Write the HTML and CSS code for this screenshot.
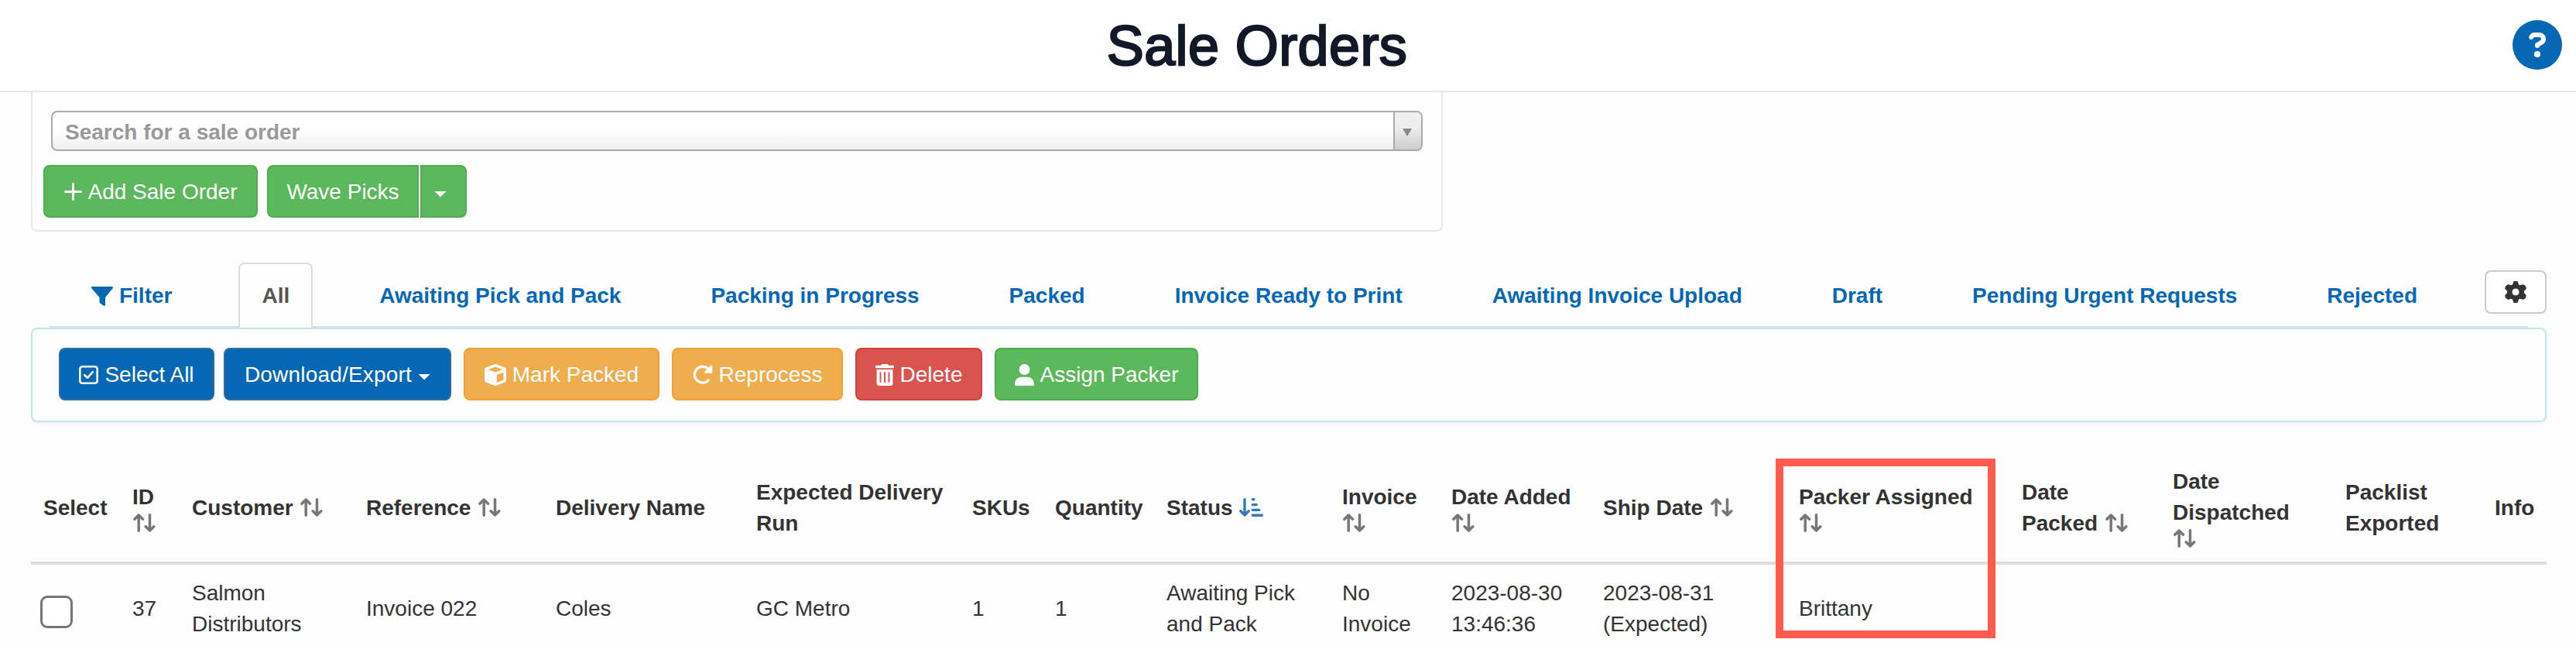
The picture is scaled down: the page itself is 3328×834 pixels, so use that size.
FILE: index.html
```html
<!DOCTYPE html>
<html lang="en">
<head>
    <meta charset="UTF-8">
    <meta name="viewport" content="width=device-width, initial-scale=1.0">
    <title>Sale Orders</title>
    <link rel="stylesheet" href="styles.css">
</head>
<body>
    <!-- shared icons -->
    <svg class="icon-defs" width="0" height="0">
        <symbol id="icon-sort" viewBox="0 0 29 24">
            <path d="M7.2 2v20.2M1.9 7.2L7.2 2l5.3 5.2M21.5 1.8V22M16.2 16.8l5.3 5.2 5.3-5.2" fill="none" stroke="currentColor" stroke-width="3.5" stroke-linecap="round" stroke-linejoin="round"/>
        </symbol>
        <symbol id="icon-sort-active" viewBox="0 0 31 24">
            <path d="M7 1.8V22M1.8 16.8L7 22l5.2-5.2M17.3 1.8h1.6M17.3 8.6h5M17.3 15.4h8.6M17.3 22.2h12.1" fill="none" stroke="currentColor" stroke-width="3.4" stroke-linecap="round" stroke-linejoin="round"/>
        </symbol>
    </svg>

    <header class="page-header">
        <h1>Sale Orders</h1>
        <a class="help" href="#" aria-label="Help">
            <svg width="64" height="64" viewBox="0 0 64 64">
                <circle cx="32" cy="32" r="32" fill="#0668b5"/>
                <path d="M24.3 22c.8-2 2-3 4.500-3h5.400c3.600 0 5.800 2.300 5.800 5.200 0 2.500-1.400 4-3.200 5L32 31.800V33" fill="none" stroke="#fff" stroke-width="6" stroke-linecap="round" stroke-linejoin="round"/>
                <circle cx="32" cy="44" r="4.1" fill="#fff"/>
            </svg>
        </a>
    </header>

    <section class="search-panel">
        <div class="search-select">
            <span class="search-text">Search for a sale order</span>
            <span class="search-arrow"><i></i></span>
        </div>
        <div class="btn-row">
            <button class="btn btn-success btn-add">
                <svg width="23" height="23" viewBox="0 0 23 23"><path d="M11.5 1.5v20M1.5 11.5h20" stroke="#fff" stroke-width="3" stroke-linecap="round"/></svg>
                Add Sale Order
            </button>
            <div class="btn-group">
                <button class="btn btn-success btn-wave">Wave Picks</button>
                <button class="btn btn-success btn-toggle"><i class="caret"></i></button>
            </div>
        </div>
    </section>

    <nav class="tabs">
        <ul class="tab-list">
            <li class="tab tab-filter">
                <svg width="28" height="25" viewBox="0 0 28 25"><path d="M1.3 0h25.4c1.2 0 1.7 1.3.9 2.2L18 14v9.8c0 1-1 1.5-1.9.9l-4.8-3.3c-.5-.3-.8-.8-.8-1.300V14L.4 2.200C-.4 1.300.1 0 1.300 0z" fill="#0668b5"/></svg>
                Filter
            </li>
            <li class="tab active">All</li>
            <li class="tab">Awaiting Pick and Pack</li>
            <li class="tab">Packing in Progress</li>
            <li class="tab">Packed</li>
            <li class="tab">Invoice Ready to Print</li>
            <li class="tab">Awaiting Invoice Upload</li>
            <li class="tab">Draft</li>
            <li class="tab">Pending Urgent Requests</li>
            <li class="tab">Rejected</li>
        </ul>
        <button class="btn-gear" aria-label="Settings">
            <svg width="28" height="28" viewBox="0 0 28 28">
                <path fill="#333" stroke="#333" stroke-linejoin="round" fill-rule="evenodd" d="M11.600.5h4.800l.9 3.900 2.500 1.400 3.900-1.200 3 2 .5 3.500-2.600 2.500v2.800l2.600 2.500-.5 3.500-3 2-3.900-1.200-2.500 1.400-.9 3.900h-4.800l-.9-3.900-2.500-1.400-3.900 1.200-3-2-.5-3.500 2.600-2.500v-2.800L.8 10.100l.5-3.500 3-2 3.900 1.200 2.500-1.400zM14 9a5 5 0 1 0 0 10 5 5 0 0 0 0-10z"/>
            </svg>
        </button>
    </nav>

    <section class="toolbar">
        <button class="btn btn-primary btn-select">
            <svg width="25" height="24" viewBox="0 0 25 24"><rect x="1.3" y="1.3" width="22.4" height="21.4" rx="3" fill="none" stroke="#fff" stroke-width="2.6"/><path d="M7.2 12.2l3.7 3.600 7-7.600" fill="none" stroke="#fff" stroke-width="2.6" stroke-linecap="round" stroke-linejoin="round"/></svg>
            Select All
        </button>
        <button class="btn btn-primary btn-download">Download/Export <i class="caret"></i></button>
        <button class="btn btn-warning btn-mark">
            <svg width="28" height="28" viewBox="0 0 28 28"><path fill="#fff" fill-rule="evenodd" d="M12.8.3a3 3 0 0 1 2.400 0L26.300 4.600A2.600 2.600 0 0 1 28 7v14a2.600 2.600 0 0 1-1.600 2.400L15.200 27.700a3 3 0 0 1-2.400 0L1.600 23.400A2.600 2.600 0 0 1 0 21V7a2.600 2.600 0 0 1 1.700-2.400zM14 3.700L4.800 7.100 14 10.600l9.200-3.500zM15.800 14v10l8.700-3.600v-9.600z"/></svg>
            Mark Packed
        </button>
        <button class="btn btn-warning btn-reprocess">
            <svg width="26" height="25" viewBox="0 0 26 25"><path d="M20.300 19.800A10.400 10.400 0 1 1 19.500 4.800l2.900 2.900" fill="none" stroke="#fff" stroke-width="3.400" stroke-linecap="round"/><path d="M24 2v7.500h-7.500z" fill="#fff" stroke="#fff" stroke-width="2.600" stroke-linejoin="round"/></svg>
            Reprocess
        </button>
        <button class="btn btn-danger btn-delete">
            <svg width="24" height="28" viewBox="0 0 24 28"><path fill="#fff" fill-rule="evenodd" d="M8.300 0h7.400l1.300 1.700h6c.6 0 1 .5 1 1v1.500c0 .6-.4 1-1 1H1c-.6 0-1-.4-1-1V2.700c0-.5.400-1 1-1h6zM1.600 7h20.800v18c0 1.700-1.300 3-3 3H4.600c-1.700 0-3-1.300-3-3zM5.500 10.500v13.200h2V10.500zM11 10.500v13.200h2V10.500zM16.500 10.500v13.200h2V10.500z"/></svg>
            Delete
        </button>
        <button class="btn btn-success btn-assign">
            <svg width="25" height="28" viewBox="0 0 25 28"><circle cx="12.5" cy="7" r="7" fill="#fff"/><path d="M8 16.700h9c4.600 0 8 4.200 8 9.300v.8c0 .7-.5 1.200-1.100 1.200H1.100C.5 28 0 27.500 0 26.800V26c0-5.100 3.400-9.300 8-9.300z" fill="#fff"/></svg>
            Assign Packer
        </button>
    </section>

    <div class="table-wrap">
        <table class="orders">
            <colgroup>
                <col class="c-select"><col class="c-id"><col class="c-customer"><col class="c-reference">
                <col class="c-delivery"><col class="c-run"><col class="c-skus"><col class="c-quantity">
                <col class="c-status"><col class="c-invoice"><col class="c-added"><col class="c-ship">
                <col class="c-packer"><col class="c-packed"><col class="c-dispatched"><col class="c-packlist">
                <col class="c-info">
            </colgroup>
            <thead>
                <tr>
                    <th>Select</th>
                    <th>ID <svg class="sort below"><use href="#icon-sort"/></svg></th>
                    <th>Customer <svg class="sort"><use href="#icon-sort"/></svg></th>
                    <th>Reference <svg class="sort"><use href="#icon-sort"/></svg></th>
                    <th>Delivery Name</th>
                    <th>Expected Delivery<br>Run</th>
                    <th>SKUs</th>
                    <th>Quantity</th>
                    <th>Status <svg class="sort sorted"><use href="#icon-sort-active"/></svg></th>
                    <th>Invoice <svg class="sort below"><use href="#icon-sort"/></svg></th>
                    <th>Date Added <svg class="sort below"><use href="#icon-sort"/></svg></th>
                    <th>Ship Date <svg class="sort"><use href="#icon-sort"/></svg></th>
                    <th>Packer Assigned <svg class="sort below"><use href="#icon-sort"/></svg></th>
                    <th>Date<br>Packed <svg class="sort"><use href="#icon-sort"/></svg></th>
                    <th>Date<br>Dispatched <svg class="sort below"><use href="#icon-sort"/></svg></th>
                    <th>Packlist<br>Exported</th>
                    <th>Info</th>
                </tr>
            </thead>
            <tbody>
                <tr>
                    <td><input type="checkbox" class="row-check"></td>
                    <td>37</td>
                    <td>Salmon<br>Distributors</td>
                    <td>Invoice 022</td>
                    <td>Coles</td>
                    <td>GC Metro</td>
                    <td>1</td>
                    <td>1</td>
                    <td>Awaiting Pick<br>and Pack</td>
                    <td>No<br>Invoice</td>
                    <td>2023-08-30<br>13:46:36</td>
                    <td>2023-08-31<br>(Expected)</td>
                    <td>Brittany</td>
                    <td></td>
                    <td></td>
                    <td></td>
                    <td></td>
                </tr>
            </tbody>
        </table>
        <div class="highlight"></div>
    </div>
</body>
</html>
```

FILE: styles.css
```css
* {
    box-sizing: border-box;
}
body {
    margin: 0;
    height: 834px;
    overflow: hidden;
    background-color: #fefefe;
    color: #333;
    font-family: "Helvetica Neue", "Liberation Sans", Arial, sans-serif;
    font-size: 28px;
    line-height: 40px;
}
.icon-defs {
    display: none;
}

/* header */
.page-header {
    display: grid;
    grid-template-columns: 1fr auto 1fr;
    align-items: center;
    height: 119px;
    padding: 0 18px 2px;
    border-bottom: 2px solid #e5e7eb;
    background-color: #fff;
}
h1 {
    grid-column: 2;
    margin: 0;
    padding: 2px 80px 0 0;
    font-size: 72px;
    font-weight: normal;
    line-height: 80px;
    letter-spacing: 0.4px;
    color: #111827;
    -webkit-text-stroke: 2.4px #111827;
}
.help {
    justify-self: end;
    height: 64px;
}

/* search */
.search-panel {
    width: 1824px;
    height: 180px;
    margin-left: 40px;
    padding: 24px 14px 0;
    border: 2px solid #e5e7eb;
    border-top: none;
    border-radius: 0 0 8px 8px;
}
.search-select {
    display: flex;
    height: 52px;
    margin: 0 10px;
    border: 2px solid #aaa;
    border-radius: 8px;
    overflow: hidden;
    background: linear-gradient(#fff 50%, #eee);
}
.search-text {
    flex: 1;
    padding-left: 16px;
    line-height: 52px;
    font-weight: bold;
    color: #999;
}
.search-arrow {
    display: flex;
    justify-content: center;
    width: 36px;
    padding: 21px 2px 0 0;
    border-left: 2px solid #aaa;
    background: linear-gradient(#eee 40%, #ccc);
}
.search-arrow i {
    width: 12px;
    height: 10px;
    background-color: #888;
    clip-path: polygon(0 0, 100% 0, 50% 100%);
}

/* buttons */
.btn-row {
    display: flex;
    gap: 12px;
    margin-top: 18px;
}
.btn-group {
    display: flex;
    gap: 2px;
}
.btn {
    display: flex;
    align-items: center;
    justify-content: center;
    gap: 8px;
    height: 68px;
    padding: 1px 0 0;
    border: 2px solid;
    border-radius: 8px;
    font: inherit;
    line-height: 40px;
    color: #fff;
    white-space: nowrap;
    cursor: pointer;
}
.btn-success {
    background-color: #5cb85c;
    border-color: #4cae4c;
}
.btn-primary {
    background-color: #0668b5;
    border-color: #2e6da4;
}
.btn-warning {
    background-color: #f0ad4e;
    border-color: #eea236;
}
.btn-danger {
    background-color: #d9534f;
    border-color: #d43f3a;
}
.btn-add {
    width: 277px;
}
.btn-wave {
    width: 196px;
    border-radius: 8px 0 0 8px;
}
.btn-toggle {
    width: 60px;
    padding-right: 8px;
    border-radius: 0 8px 8px 0;
}
.caret {
    width: 16px;
    height: 8px;
    margin-top: 6px;
    background-color: #fff;
    clip-path: polygon(0 0, 100% 0, 50% 100%);
}

/* tabs */
.tabs {
    display: flex;
    align-items: flex-start;
    justify-content: space-between;
    height: 84px;
    margin: 40px 38px 0 64px;
    background: linear-gradient(#ddd, #ddd) 0 82px / 3202px 2px no-repeat;
}
.tab-list {
    display: flex;
    justify-content: space-around;
    width: 3121px;
    margin: 0 0 0 -4px;
    padding: 0;
    list-style: none;
}
.tab {
    display: flex;
    align-items: center;
    gap: 8px;
    height: 84px;
    padding: 0 28px;
    border: 2px solid transparent;
    border-bottom: none;
    font-weight: bold;
    color: #0668b5;
    white-space: nowrap;
}
.tab.active {
    border-color: #ddd;
    border-radius: 8px 8px 0 0;
    background-color: #fefefe;
    color: #555;
}
.btn-gear {
    display: flex;
    align-items: center;
    justify-content: center;
    width: 80px;
    height: 56px;
    margin-top: 10px;
    padding: 0;
    border: 2px solid #ccc;
    border-radius: 8px;
    background-color: #fff;
}

/* toolbar */
.toolbar {
    display: flex;
    gap: 16px;
    height: 122px;
    margin: 0 38px 0 40px;
    padding: 24px 34px;
    border: 2px solid #bce8f1;
    border-radius: 8px;
    box-shadow: 0 2px 2px rgba(0, 0, 0, 0.05);
}
.btn-select {
    width: 201px;
    margin-right: -4px;
}
.btn-download {
    width: 294px;
    letter-spacing: 0.2px;
}
.btn-mark {
    width: 253px;
}
.btn-reprocess {
    width: 221px;
}
.btn-delete {
    width: 164px;
}
.btn-assign {
    width: 263px;
}

/* table */
.table-wrap {
    position: relative;
    width: 3250px;
    margin: 41px 0 0 40px;
}
.orders {
    width: 3250px;
    table-layout: fixed;
    border-collapse: separate;
    border-spacing: 0;
}
.orders th,
.orders td {
    padding: 17px 0 15px 17px;
    text-align: left;
    vertical-align: middle;
    white-space: nowrap;
}
.orders th {
    height: 143px;
    padding: 0 0 0 17px;
    border-bottom: 4px solid #ddd;
}
.orders th:first-child,
.orders td:first-child {
    padding-left: 16px;
}
.c-select { width: 114px; }
.c-id { width: 77px; }
.c-customer { width: 225px; }
.c-reference { width: 245px; }
.c-delivery { width: 259px; }
.c-run { width: 279px; }
.c-skus { width: 107px; }
.c-quantity { width: 144px; }
.c-status { width: 227px; }
.c-invoice { width: 141px; }
.c-added { width: 196px; }
.c-ship { width: 253px; }
.c-packer { width: 288px; }
.c-packed { width: 195px; }
.c-dispatched { width: 223px; }
.c-packlist { width: 193px; }
.c-info { width: 84px; }
.sort {
    width: 29px;
    height: 24px;
    margin-left: 2px;
    vertical-align: -2px;
    color: #777;
}
.sort.below {
    display: block;
    margin: 1px 0 3px 1px;
}
.sort.sorted {
    width: 31px;
    margin-left: 1px;
    color: #337ab7;
}
.row-check {
    display: block;
    appearance: none;
    width: 42px;
    height: 42px;
    margin: 7px 0 0 -4px;
    border: 3px solid #767676;
    border-radius: 9px;
    background-color: #fff;
}
.highlight {
    position: absolute;
    left: 2254px;
    top: 6px;
    width: 284px;
    height: 232px;
    border: 10px solid #ff5a4c;
}
```
